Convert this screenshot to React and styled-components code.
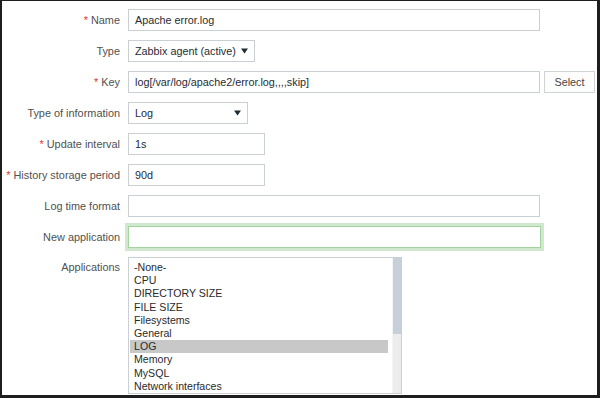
import React from 'react';
import styled, { createGlobalStyle } from 'styled-components';

const GlobalStyle = createGlobalStyle`
  html, body {
    margin: 0;
    padding: 0;
    background: #fff;
  }
  * {
    box-sizing: border-box;
  }
`;

const Frame = styled.div`
  width: 600px;
  height: 398px;
  overflow: hidden;
  background: #fff;
  border-style: solid;
  border-color: #1e1e1e;
  border-width: 1px 3px 3px 2px;
  font-family: "Liberation Sans", Arial, sans-serif;
`;

const Form = styled.div`
  display: grid;
  grid-template-columns: 118px 1fr;
  column-gap: 8px;
  row-gap: 9px;
  padding-top: 8px;
`;

const Label = styled.div`
  display: flex;
  justify-content: flex-end;
  align-items: ${(p) => (p.$top ? 'flex-start' : 'center')};
  padding-top: ${(p) => (p.$top ? '4px' : '0')};
  font-size: 10.9px;
  color: #505050;
  white-space: nowrap;
`;

const Star = styled.span`
  color: #e03a32;
  margin-right: 3px;
`;

const Field = styled.div`
  display: flex;
  align-items: center;
  gap: 4px;
`;

const Input = styled.div`
  width: ${(p) => p.$w}px;
  height: 22px;
  display: flex;
  align-items: center;
  padding: 0 6px;
  border: 1px solid ${(p) => (p.$focus ? '#a3d3a0' : '#c9cfd3')};
  box-shadow: ${(p) => (p.$focus ? '0 0 0 3px #d0e9ce' : 'none')};
  background: #fff;
  font-size: 10.8px;
  color: #1f2c33;
  white-space: nowrap;
  overflow: hidden;
`;

const SelectBox = styled(Input)`
  justify-content: space-between;
  padding-right: 6px;
`;

const Arrow = () => (
  <svg width="7" height="6" viewBox="0 0 7 6">
    <path d="M0 0.5 L7 0.5 L3.5 5.5 Z" fill="#1f2c33" />
  </svg>
);

const Button = styled.div`
  width: 51px;
  height: 22px;
  display: flex;
  align-items: center;
  justify-content: center;
  border: 1px solid #cfd3d6;
  background: #fdfdfd;
  font-size: 10.8px;
  color: #454545;
`;

const ListBox = styled.div`
  width: 274px;
  height: 137px;
  display: flex;
  border: 1px solid #c9cfd3;
  background: #fff;
  overflow: hidden;
`;

const Options = styled.div`
  flex: 1;
  padding: 3px 4px 0 1px;
`;

const Option = styled.div`
  height: 13.2px;
  line-height: 13.2px;
  padding-left: 4px;
  font-size: 10.6px;
  color: #2a2a2a;
  white-space: nowrap;
  background: ${(p) => (p.$selected ? '#c8c8c8' : 'transparent')};
`;

const Track = styled.div`
  width: 9px;
  background: #ececec;
  border-left: 1px solid #f4f4f4;
`;

const Thumb = styled.div`
  height: 76px;
  background: #c7d0d8;
`;

const apps = [
  '-None-',
  'CPU',
  'DIRECTORY SIZE',
  'FILE SIZE',
  'Filesystems',
  'General',
  'LOG',
  'Memory',
  'MySQL',
  'Network interfaces',
];

export default function App() {
  return (
    <>
      <GlobalStyle />
      <Frame>
        <Form>
          <Label><Star>*</Star>Name</Label>
          <Field><Input $w={412}>Apache error.log</Input></Field>

          <Label>Type</Label>
          <Field>
            <SelectBox $w={127}>Zabbix agent (active)<Arrow /></SelectBox>
          </Field>

          <Label><Star>*</Star>Key</Label>
          <Field>
            <Input $w={412}>log[/var/log/apache2/error.log,,,,skip]</Input>
            <Button>Select</Button>
          </Field>

          <Label>Type of information</Label>
          <Field>
            <SelectBox $w={120}>Log<Arrow /></SelectBox>
          </Field>

          <Label><Star>*</Star>Update interval</Label>
          <Field><Input $w={137}>1s</Input></Field>

          <Label><Star>*</Star>History storage period</Label>
          <Field><Input $w={137}>90d</Input></Field>

          <Label>Log time format</Label>
          <Field><Input $w={412} /></Field>

          <Label>New application</Label>
          <Field><Input $w={413} $focus /></Field>

          <Label $top>Applications</Label>
          <Field>
            <ListBox>
              <Options>
                {apps.map((a) => (
                  <Option key={a} $selected={a === 'LOG'}>{a}</Option>
                ))}
              </Options>
              <Track><Thumb /></Track>
            </ListBox>
          </Field>
        </Form>
      </Frame>
    </>
  );
}
